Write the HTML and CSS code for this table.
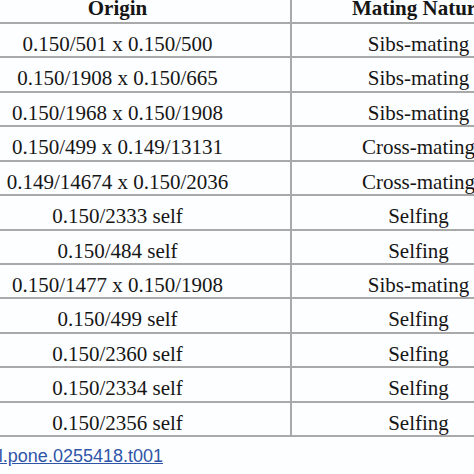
FILE: index.html
```html
<!DOCTYPE html>
<html lang="en">
<head>
<meta charset="utf-8">
<title>Mating nature table</title>
<link rel="stylesheet" href="styles.css">
</head>
<body>
<div class="frame">
  <table class="data">
    <thead>
      <tr>
        <th class="c1">Origin</th>
        <th class="c2">Mating Nature</th>
      </tr>
    </thead>
    <tbody>
      <tr><td class="c1">0.150/501 x 0.150/500</td><td class="c2">Sibs-mating</td></tr>
      <tr><td class="c1">0.150/1908 x 0.150/665</td><td class="c2">Sibs-mating</td></tr>
      <tr><td class="c1">0.150/1968 x 0.150/1908</td><td class="c2">Sibs-mating</td></tr>
      <tr><td class="c1">0.150/499 x 0.149/13131</td><td class="c2">Cross-mating</td></tr>
      <tr><td class="c1">0.149/14674 x 0.150/2036</td><td class="c2">Cross-mating</td></tr>
      <tr><td class="c1">0.150/2333 self</td><td class="c2">Selfing</td></tr>
      <tr><td class="c1">0.150/484 self</td><td class="c2">Selfing</td></tr>
      <tr><td class="c1">0.150/1477 x 0.150/1908</td><td class="c2">Sibs-mating</td></tr>
      <tr><td class="c1">0.150/499 self</td><td class="c2">Selfing</td></tr>
      <tr><td class="c1">0.150/2360 self</td><td class="c2">Selfing</td></tr>
      <tr><td class="c1">0.150/2334 self</td><td class="c2">Selfing</td></tr>
      <tr><td class="c1">0.150/2356 self</td><td class="c2">Selfing</td></tr>
    </tbody>
  </table>
  <div class="doi">
    <a class="doi-link" href="#">https://doi.org/10.1371/journal.pone.0255418.t001</a>
  </div>
</div>
</body>
</html>
```
FILE: styles.css
```css
html, body {
  margin: 0;
  padding: 0;
  background: #ffffff;
}

.frame {
  width: 474px;
  height: 474px;
  overflow: hidden;
  background: #fdfeff;
}

.data {
  border-collapse: separate;
  border-spacing: 0;
  table-layout: fixed;
  width: 600px;
  margin-left: -55px;
  margin-top: -10.42px;
  font-family: "Liberation Serif", "Times New Roman", serif;
  font-size: 21px;
  color: #161616;
}

.data th,
.data td {
  box-sizing: border-box;
  text-align: center;
  white-space: nowrap;
  line-height: 23.42px;
  padding: 9px 0 0 0;
  border-bottom: 2px solid #a9a9a9;
}

.data th {
  font-weight: bold;
  padding-top: 7.3px;
  padding-bottom: 1.7px;
}

.data .c1 {
  width: 347px;
  border-right: 2px solid #a9a9a9;
}

.data .c2 {
  width: 253px;
}

.doi {
  width: 163px;
  display: flex;
  justify-content: flex-end;
  margin-top: 9.4px;
  font-family: "Liberation Sans", Arial, sans-serif;
  font-size: 18px;
  line-height: 20px;
}

.doi-link {
  flex: none;
  white-space: nowrap;
  color: #2f55a8;
  text-decoration: underline;
}
```
